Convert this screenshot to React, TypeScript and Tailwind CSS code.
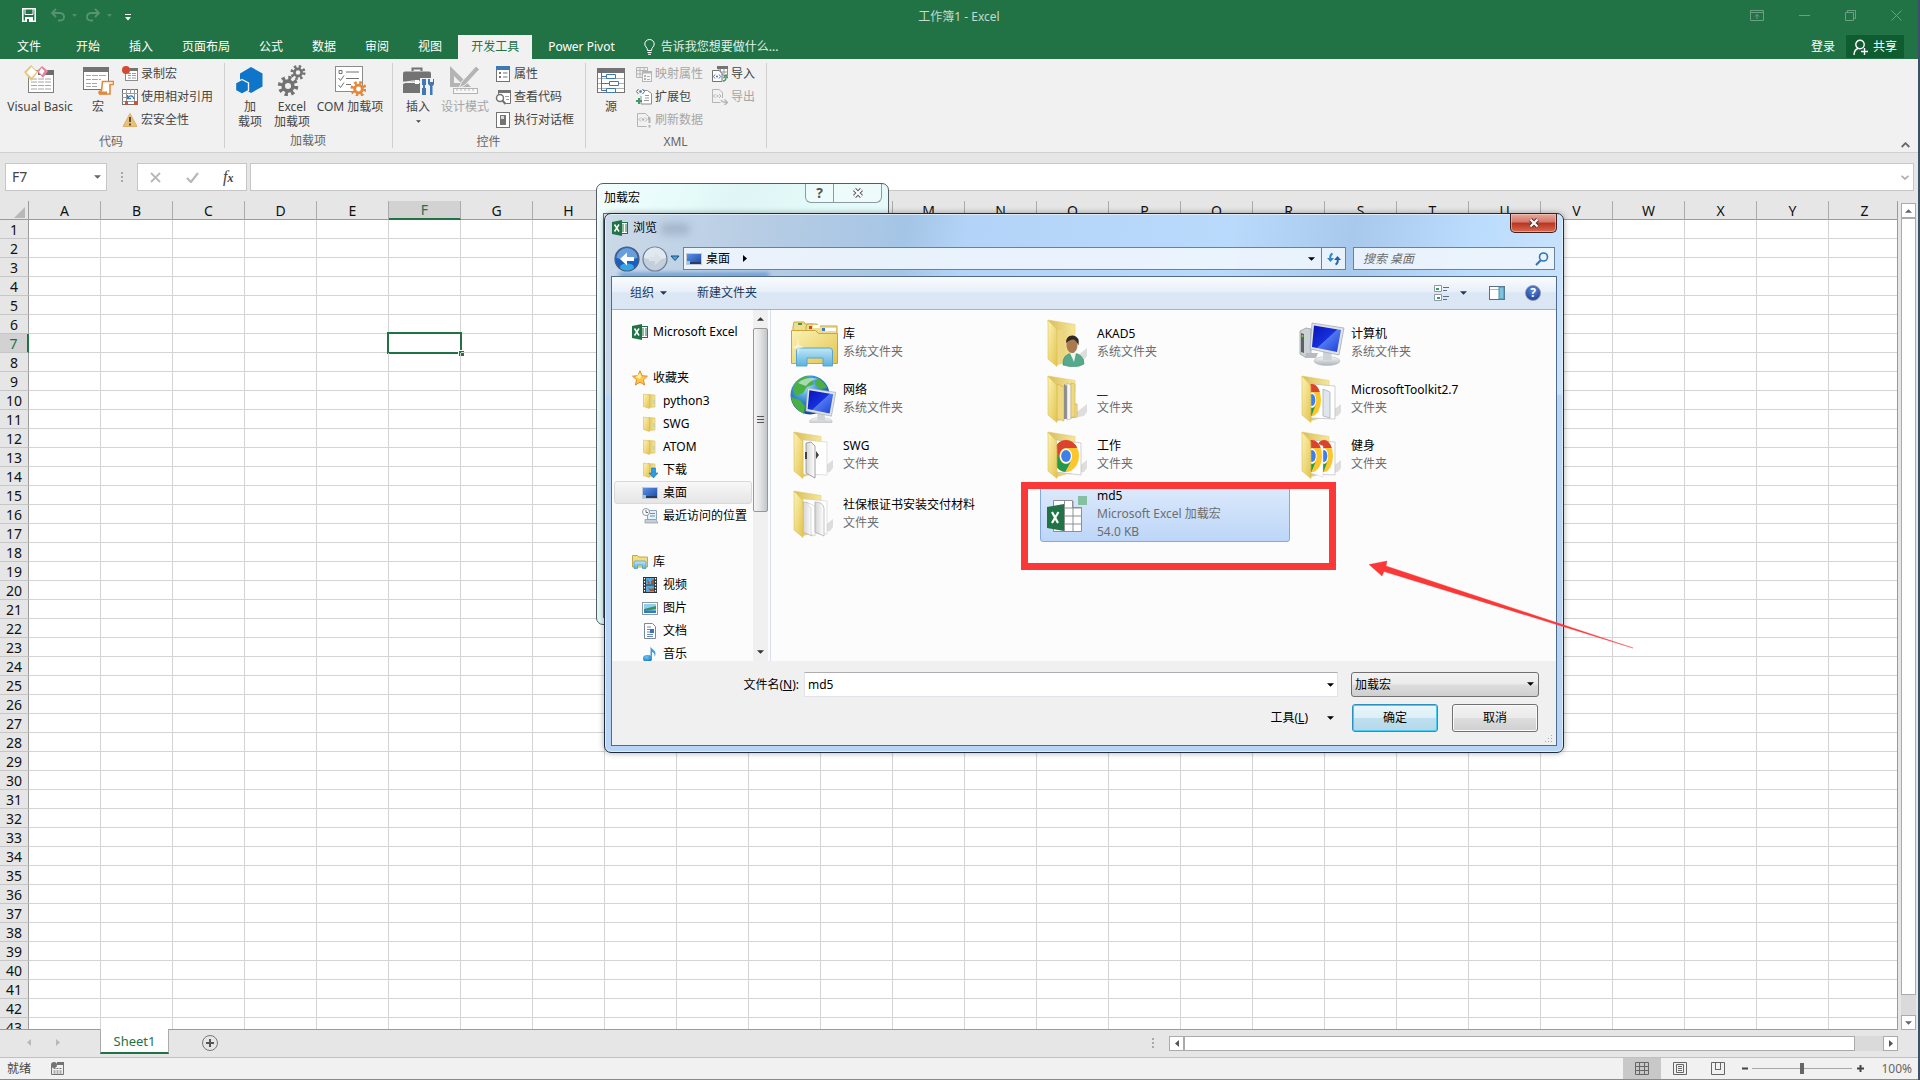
import React from "react";

type IconProps = { className?: string; children?: React.ReactNode; box?: string };

function Svg({ className = "h-4 w-4", box = "0 0 16 16", children }: IconProps) {
  return (
    <svg viewBox={box} className={`shrink-0 ${className}`} fill="none" aria-hidden="true">
      {children}
    </svg>
  );
}

const Big = ({ children }: { children: React.ReactNode }) => (
  <Svg className="h-8 w-8" box="0 0 32 32">
    {children}
  </Svg>
);

const Down = ({ className = "h-1 w-2" }: { className?: string }) => (
  <Svg className={className} box="0 0 8 4">
    <path d="M0 0h8L4 4z" fill="currentColor" />
  </Svg>
);

/* Gradients shared by the shell icons */
function SharedGradients() {
  return (
    <svg className="absolute h-0 w-0" aria-hidden="true">
      <defs>
        <linearGradient id="folderFront" x1="0" y1="0" x2="1" y2="1">
          <stop offset="0" stopColor="#fbf3b4" />
          <stop offset="1" stopColor="#e3c34f" />
        </linearGradient>
        <linearGradient id="folderBack" x1="0" y1="0" x2="1" y2="0">
          <stop offset="0" stopColor="#d9bd5a" />
          <stop offset="1" stopColor="#f7e79a" />
        </linearGradient>
        <linearGradient id="paper" x1="0" y1="0" x2="1" y2="0">
          <stop offset="0" stopColor="#d4d4d4" />
          <stop offset="1" stopColor="#ffffff" />
        </linearGradient>
        <linearGradient id="screen" x1="0" y1="0" x2="1" y2="1">
          <stop offset="0" stopColor="#0a14b8" />
          <stop offset="0.5" stopColor="#1631dc" />
          <stop offset="0.52" stopColor="#4f77f0" />
          <stop offset="1" stopColor="#1c3fd8" />
        </linearGradient>
        <linearGradient id="stand" x1="0" y1="0" x2="0" y2="1">
          <stop offset="0" stopColor="#fafafa" />
          <stop offset="1" stopColor="#adb2b8" />
        </linearGradient>
        <linearGradient id="tray" x1="0" y1="0" x2="0" y2="1">
          <stop offset="0" stopColor="#bfe8f6" />
          <stop offset="1" stopColor="#5db0df" />
        </linearGradient>
        <radialGradient id="globe" cx="0.4" cy="0.3" r="0.75">
          <stop offset="0" stopColor="#9fdcf5" />
          <stop offset="0.5" stopColor="#2f86d0" />
          <stop offset="1" stopColor="#0d3f8c" />
        </radialGradient>
        <linearGradient id="desk" x1="0" y1="0" x2="1" y2="1">
          <stop offset="0" stopColor="#5b93e6" />
          <stop offset="1" stopColor="#1c48a6" />
        </linearGradient>
        <radialGradient id="note" cx="0.4" cy="0.3" r="0.8">
          <stop offset="0" stopColor="#6fc6f0" />
          <stop offset="1" stopColor="#0a6ab8" />
        </radialGradient>
      </defs>
    </svg>
  );
}

/* ---------- Ribbon icons ---------- */

const gearPath = (cx: number, cy: number, r: number, color: string, hole: string) => (
  <g>
    <circle cx={cx} cy={cy} r={r * 0.85} stroke={color} strokeWidth={r * 0.45} strokeDasharray={`${(r * 0.85 * 6.283) / 16} ${(r * 0.85 * 6.283) / 16}`} />
    <circle cx={cx} cy={cy} r={r * 0.7} fill={color} />
    <circle cx={cx} cy={cy} r={r * 0.32} fill={hole} />
  </g>
);

const VisualBasicIcon = () => (
  <Big>
    <rect x="4.5" y="6.5" width="25" height="22" fill="#fff" stroke="#808080" />
    <path d="M14 6h16v5H14z" fill="#6d6d6d" />
    <path d="M7 15h6m1 0h6m1 0h6M7 18h6m1 0h6m1 0h6M7 21.500h6m1 0h6m1 0h6M7 25h6m1 0h6m1 0h6" stroke="#a6a6a6" />
    <path d="M7 1l7 7-7 9-7-9z" fill="#e8c77c" />
    <path d="M7.500 3l5 5-5 5.500-5-5z" fill="#fff" />
    <path d="M18 2l6 5-5 7-6-7z" fill="#e0879f" />
    <path d="M17.500 4l3 3-2.500 4-3-3z" fill="#fff" />
  </Big>
);

const MacroIcon = () => (
  <Big>
    <rect x="1.500" y="3.500" width="25" height="22" fill="#fff" stroke="#737373" />
    <path d="M1 3h26v5H1z" fill="#737373" />
    <path d="M4 11.500h5m1 0h6m1 0h7M4 15.500h5m1 0h6m1 0h2M4 19.500h5m1 0h5M4 22.500h5m1 0h5" stroke="#a6a6a6" />
    <path d="M20.500 17.500h11v3H28v9.500H18.500c-2 0-2-3 0-3h1z" fill="#fff" stroke="#e28a3c" strokeWidth="1.600" />
    <path d="M17 27.500h8v3h-8z" fill="#e28a3c" />
  </Big>
);

const StoreIcon = () => (
  <Big>
    <path d="M17 3l11.500 6.500v13L17 29 6 22.500v-13z" fill="#0f75c8" />
    <path d="M8 15.500l6.500 3.500v7.500L8 30l-6.500-3.500V19z" fill="#0f75c8" stroke="#f1f1f1" strokeWidth="1.400" />
  </Big>
);

const ExcelAddinIcon = () => (
  <Big>
    {gearPath(22, 8.500, 7, "#737373", "#f1f1f1")}
    {gearPath(12, 22, 9.500, "#737373", "#f1f1f1")}
  </Big>
);

const ComAddinIcon = () => (
  <Big>
    <rect x="1.500" y="2.500" width="27" height="25" fill="#fff" stroke="#8c8c8c" />
    <path d="M5 6.500h3v3H5zM4.500 14l2 2.500 3.500-5M4.500 21l2 2.500 3.500-5" stroke="#737373" />
    <path d="M12 8h13M12 14.500h13M12 20.500h5" stroke="#737373" />
    {gearPath(24.500, 25, 7.500, "#e28a3c", "#fff")}
  </Big>
);

const InsertControlIcon = () => (
  <Big>
    <path d="M10.500 7V4.500h9V7" stroke="#737373" strokeWidth="2" />
    <path d="M1 9.500q0-2 2-2h24q2 0 2 2v8H1zM1 19h28v8q0 2-2 2H1z" fill="#737373" />
    <path d="M1 19.500c7-3 12-3 18-2" stroke="#f1f1f1" />
    <path d="M13 16h4v4h-4z" fill="#fff" />
    <path d="M18 14h14v18H18z" fill="#f1f1f1" />
    <path d="M20 15h4v6h-1v3h1v7h-4v-7h1v-3h-1zM26 15v5l2 2v9h2.500v-9l2-2v-5h-1.500v3h-3v-3z" fill="#3f78b5" />
  </Big>
);

const DesignIcon = () => (
  <Big>
    <path d="M1 2l21 21H1zM5 12v7h7z" fill="#b4b4b4" fillRule="evenodd" />
    <path d="M27 2l3.500 3.500L16 21l-6 3 2.500-6z" fill="#b4b4b4" stroke="#f1f1f1" />
    <rect x="4.500" y="24.500" width="24" height="5" fill="#f8f8f8" stroke="#b4b4b4" />
    <path d="M8 24v3m4-3v3m4-3v3m4-3v3m4-3v3" stroke="#b4b4b4" />
  </Big>
);

const SourceIcon = () => (
  <Big>
    <rect x="2.500" y="4.500" width="27" height="24" fill="#fff" stroke="#737373" />
    <path d="M2 4h28v5H2z" fill="#737373" />
    <path d="M3 14.500h26M3 19.500h26M3 24.500h26" stroke="#b0b0b0" />
    <path d="M6.500 5v21.500h5M6.500 12.500h5M6.500 19.500h8" stroke="#3f78b5" />
    <path d="M11.500 10.500h9v4h-9zM14.500 17.500h9v4h-9zM11.500 24.500h9v4h-9z" fill="#fff" stroke="#3f78b5" />
  </Big>
);

const RecordIcon = () => (
  <Svg>
    <rect x="3.500" y="2.500" width="12" height="12" fill="#fff" stroke="#8c8c8c" />
    <path d="M8 2h8v3H8z" fill="#737373" />
    <path d="M6 7.500h3m1 0h4M6 9.500h3m1 0h4M6 12h3m1 0h4" stroke="#9a9a9a" />
    <circle cx="4" cy="4" r="4" fill="#d24a30" />
  </Svg>
);

const RelativeIcon = () => (
  <Svg>
    <rect x="0.500" y="0.500" width="15" height="15" fill="#fff" stroke="#737373" />
    <path d="M0 4.500h16M4.500 0v16M8.500 0v4M12.500 0v16M0 8.500h4M0 12.500h16" stroke="#9a9a9a" />
    <path d="M3 12h3v4H3zM12 12h4v4h-4z" fill="#c4573d" />
    <path d="M5 5h7v7H5z" fill="#fff" />
    <path d="M6 9c1-3 5-3 6 1M5.500 6v3.500H9" stroke="#3f78b5" strokeWidth="1.300" />
  </Svg>
);

const WarningIcon = () => (
  <Svg>
    <path d="M8 1.500L15 14.500H1z" fill="#e8c077" stroke="#dcb169" />
    <path d="M8 5v5M8 11.500v2" stroke="#444" strokeWidth="1.800" />
  </Svg>
);

const PropsIcon = () => (
  <Svg>
    <rect x="1.500" y="0.500" width="13" height="15" fill="#fff" stroke="#737373" />
    <path d="M1 0h14v4H1z" fill="#3f78b5" />
    <path d="M4 6h2v2H4zM4 10h2v2H4z" fill="#737373" />
    <path d="M8 7h4.500M8 11h4.500" stroke="#737373" />
  </Svg>
);

const CodeIcon = () => (
  <Svg>
    <path d="M3.500 5V1.500h12v13h-6" stroke="#737373" fill="#fff" />
    <path d="M3 1h13v3H3z" fill="#737373" />
    <path d="M10 7.500h4M11 10.500h3" stroke="#9a9a9a" />
    <circle cx="5" cy="9" r="3.500" fill="#fff" stroke="#737373" strokeWidth="1.500" />
    <path d="M7.500 11.500l3 3.500" stroke="#737373" strokeWidth="2" />
  </Svg>
);

const RunDialogIcon = () => (
  <Svg>
    <rect x="1.500" y="0.500" width="13" height="15" fill="#fff" stroke="#737373" />
    <rect x="5" y="3" width="6" height="10" fill="#737373" />
    <path d="M6 4h3v3H6z" fill="#d8d8d8" />
  </Svg>
);

const MapIcon = () => (
  <Svg>
    <path d="M.5 1.500h11v10H.5zM.5 4.500h11M.5 8h6M4 2v9M8 2v4" stroke="#b4b4b4" />
    <rect x="6.500" y="5.500" width="9" height="10" fill="#f6f6f6" stroke="#b4b4b4" />
    <path d="M6 5h10v2.500H6zM8 9h2v2H8zM8 12h2v2H8zM11 10h3v1h-3zM11 13h3v1h-3z" fill="#b4b4b4" />
  </Svg>
);

const PackIcon = () => (
  <Svg>
    <path d="M7 1.500h4.500l4 3V15H5V7" fill="#fff" stroke="#8c8c8c" />
    <path d="M9 6.500h4M9 9h4M8 11.500h5" stroke="#9a9a9a" />
    <path d="M2.500 0L.5 2.500l2 2.500M6.500 0l2 2.500-2 2.500" stroke="#3f78b5" />
    <circle cx="4.500" cy="2.500" r="1.300" fill="#3f78b5" />
    <path d="M3 9v6M0 12h6" stroke="#3f9a68" strokeWidth="2" />
  </Svg>
);

const RefreshDataIcon = () => (
  <Svg>
    <path d="M1.500 1.500h8l3 3V8M1.500 1.500v13h9" stroke="#b4b4b4" />
    <path d="M5 5.500l-2 2 2 2M9 5.500l2 2-2 2" stroke="#b4b4b4" />
    <circle cx="7" cy="7.500" r="1.200" fill="#b4b4b4" />
    <path d="M13.500 5v6M13.500 13v2.500" stroke="#b4b4b4" strokeWidth="2" />
  </Svg>
);

const ImportIcon = () => (
  <Svg>
    <path d="M5.500 1.500h10v8h-4z" fill="#fff" stroke="#8c8c8c" />
    <path d="M5 0h11v3H5z" fill="#737373" />
    <path d="M8.500 3v3M12 3v6M8 6h8" stroke="#9a9a9a" />
    <path d="M.5 4.500H7l3 3v8H.5z" fill="#fff" stroke="#737373" />
    <path d="M3 8.500l-1.500 2L3 12.500M7 8.500l1.500 2-1.500 2" stroke="#3f78b5" />
    <circle cx="5" cy="10.500" r="1" fill="#3f78b5" />
    <path d="M11 15c2 0 3-1 3-4M11.500 12L14 9l2 3" stroke="#3f9a68" strokeWidth="1.400" />
  </Svg>
);

const ExportIcon = () => (
  <Svg>
    <path d="M.5.5H7l3.500 3V9M.5.500v13h8" stroke="#b4b4b4" />
    <path d="M3.500 5l-2 2 2 2M7 5l2 2-2 2" stroke="#b4b4b4" />
    <circle cx="5.500" cy="7" r="1" fill="#b4b4b4" />
    <path d="M9 11c1 2 3 2.500 6 2.500M12.500 10.500l3 3-3 2.500" stroke="#b4b4b4" strokeWidth="1.400" />
  </Svg>
);

/* ---------- Shell icons ---------- */

const ExcelMark = () => (
  <Svg>
    <rect x="8.500" y="2.500" width="7" height="11" fill="#fff" stroke="#217346" />
    <path d="M10 5h2m1 0h2M10 7h2m1 0h2M10 9h2m1 0h2M10 11h2m1 0h2" stroke="#217346" />
    <path d="M0 2l10-2v16L0 14z" fill="#217346" />
    <path d="M2.500 4.500l4.500 7M7 4.500l-4.500 7" stroke="#fff" strokeWidth="1.500" />
  </Svg>
);

const StarIcon = () => (
  <Svg>
    <path d="M8 .8l2.100 4.900 5.300.5-4 3.600 1.200 5.200L8 12.200 3.400 15l1.200-5.200-4-3.600 5.300-.5z" fill="#fbc64a" stroke="#e58a2c" />
    <path d="M8 3l1.300 3.500L8 9 4 7z" fill="#fff0a8" />
  </Svg>
);

const FolderMini = ({ arrow }: { arrow?: boolean }) => (
  <Svg>
    <path d="M6 1.500l7 .5v12l-7 .5z" fill="url(#folderBack)" stroke="#d8bb5e" strokeWidth=".6" />
    <path d="M1.500 1l6 1v13.500l-6-2z" fill="url(#folderFront)" stroke="#d8bb5e" strokeWidth=".6" />
    <path d="M11 7h2v4h-2z" fill="#bcd8b8" />
    {arrow && <path d="M9.500 6h4v5H16l-4.500 5L7 11h2.500z" fill="#2f9be0" stroke="#1874b8" strokeWidth=".6" />}
  </Svg>
);

const DesktopMini = () => (
  <Svg>
    <rect x="0" y="2" width="16" height="12" fill="#c3cad4" />
    <rect x="1" y="3" width="14" height="10" fill="url(#desk)" />
    <path d="M1 11h14v2H1z" fill="#2b3c5c" />
    <path d="M1 10h3v3H1z" fill="#7fd0f0" />
  </Svg>
);

const RecentMini = () => (
  <Svg>
    <path d="M5.500 2.500h9v9h-9z" fill="#e8f0f6" stroke="#8ea3b5" />
    <path d="M8 5.500h5M8 8h5" stroke="#4a9bd0" />
    <circle cx="4" cy="4" r="3.500" fill="#fff" stroke="#8c98a3" />
    <path d="M4 2v2.500h2" stroke="#667" />
    <path d="M3 11.500h11l2 3.500H3z" fill="#c9ced3" stroke="#8c98a3" strokeWidth=".7" />
  </Svg>
);

const LibraryMini = () => (
  <Svg>
    <path d="M.5 3V1.500h5L7 3h8.500v10H.5z" fill="#f2dd84" stroke="#c9a945" />
    <path d="M2 14.500V8q0-1 1-1h10q1 0 1 1v6.500h-3.500V11h-5v3.500z" fill="url(#tray)" stroke="#3f98c8" strokeWidth=".7" />
  </Svg>
);

const VideoMini = () => (
  <Svg>
    <rect x="1" y="0" width="14" height="16" fill="#2a3137" />
    <rect x="4" y="1" width="8" height="6.500" fill="#58a8dc" />
    <rect x="4" y="8.500" width="8" height="6.500" fill="#58a8dc" />
    <path d="M5 2l3 4-2 1M9 4l3-2v5H9zM6 11l3 1 3-1v3H8z" fill="#a5522e" />
    <path d="M2.500 1v14M13.500 1v14" stroke="#fff" strokeWidth="1.200" strokeDasharray="1.500 1.500" />
  </Svg>
);

const PictureMini = () => (
  <Svg>
    <rect x=".5" y="2.500" width="15" height="12" fill="#fff" stroke="#8c98a3" />
    <path d="M2 4h12v9H2z" fill="#8fd0f0" />
    <path d="M2 9l4-1 8-2v3l-5 1-7 1z" fill="#3f8f5c" />
    <path d="M2 10.500h12V13H2z" fill="#2f7fc0" />
  </Svg>
);

const DocMini = () => (
  <Svg>
    <path d="M2.500.5h8l3 3v12h-11z" fill="#fff" stroke="#7d8894" />
    <path d="M5 4h4M5 6.500h3M5 9h3M5 11.500h6M5 13.500h6" stroke="#6a8cb8" />
    <path d="M8 6h4v4H8z" fill="#3f72b4" />
  </Svg>
);

const MusicMini = () => (
  <Svg>
    <ellipse cx="5.500" cy="12.500" rx="4.500" ry="3.400" fill="url(#note)" />
    <path d="M8.500 13V.5c1 3 5 3.500 5 7 0 2-1 3-1 3 .3-3-1-4-2.500-4.500V13z" fill="#3f9ede" />
  </Svg>
);

const Large = ({ children }: { children: React.ReactNode }) => (
  <Svg className="h-12 w-12" box="0 0 48 48">
    {children}
  </Svg>
);

const LibraryLarge = () => (
  <Large>
    <path d="M3 8l1-5h10l1 2h8v8H3z" fill="#f0dd8c" stroke="#c9a945" />
    <path d="M16 8l1-3h10l1 2h19v10H16z" fill="#f0dd8c" stroke="#c9a945" />
    <path d="M8 4h4v2H8z" fill="#3f9a48" />
    <path d="M19 7h3v3h-3z" fill="#d24a30" />
    <path d="M23 6h7v3h-7zM34 9h12v3H34z" fill="#fff" />
    <path d="M32 9h3v3h-3z" fill="#3f78c8" />
    <path d="M1.500 11.500h24l3 3h19v30h-46z" fill="url(#folderFront)" stroke="#caa53c" />
    <path d="M6.500 47V32q0-3 3-3h30q3 0 3 3v15H33v-8H17v8z" fill="url(#tray)" stroke="#58a5cc" />
    <path d="M8 19l1 7 5 2-5 2-1 7-1-7-5-2 5-2z" fill="#fff" opacity=".5" />
  </Large>
);

const Monitor = ({ x = 0, y = 0 }: { x?: number; y?: number }) => (
  <g transform={`translate(${x} ${y})`}>
    <ellipse cx="17" cy="38" rx="13" ry="4.500" fill="url(#stand)" stroke="#b9bdc2" strokeWidth=".6" />
    <path d="M13 28h8l1 9h-9z" fill="#cfd3d7" />
    <path d="M2 0l32 5-5 27L0 26z" fill="#dfe3e6" stroke="#9ea4aa" strokeWidth=".7" />
    <path d="M4 2.500l27 4.500-4 22L2 24z" fill="url(#screen)" />
  </g>
);

const NetworkLarge = () => (
  <Large>
    <circle cx="20" cy="20" r="19.500" fill="url(#globe)" />
    <path d="M3 12q5-9 13-11l6 3 2 5-7 3-4 6-8 3zM27 3q7 3 10 10l-7 1-5-5zM1 22l9 3 5 6-1 8Q3 34 1 22z" fill="#4bb043" />
    <path d="M8 8q8-7 20-4-8 1-12 7z" fill="#e6f7fb" opacity=".6" />
    <g transform="translate(15 13) scale(.88)">
      <Monitor x={1} y={0} />
    </g>
  </Large>
);

const ComputerLarge = () => (
  <Large>
    <path d="M2 12l6-3 5 1v26l-6 2-5-3z" fill="#cdd2d6" stroke="#8f959b" strokeWidth=".7" />
    <path d="M3 14l3 1v19l-3-1z" fill="#5c6268" />
    <circle cx="4.500" cy="17" r="1" fill="#7be03a" />
    <path d="M8 34h12l-2 5H7z" fill="#b8bcc1" />
    <Monitor x={12} y={4} />
  </Large>
);

function FolderShell({ children }: { children?: React.ReactNode }) {
  return (
    <Large>
      <path d="M24 44l16-3 3-4v-8z" fill="#000" opacity=".12" />
      <path d="M4 1l27 4.500v8L29 41 12 46z" fill="url(#folderBack)" stroke="#dcc46e" strokeWidth=".5" />
      {children}
      <path d="M4 1l8.500 9c.6 2 .5 24 .5 37.500L4 40z" fill="url(#folderFront)" stroke="#dcc052" strokeWidth=".6" />
    </Large>
  );
}

const Sheet = ({ x }: { x: number }) => (
  <path d={`M${x} 12q8 0 9 6v28l-9-4z`} fill="url(#paper)" stroke="#a9a9a9" strokeWidth=".7" />
);

const ChromeDisc = ({ cx, rx = 11 }: { cx: number; rx?: number }) => (
  <g transform={`translate(${cx} 25) scale(${rx / 16} 1)`}>
    <circle r="16" fill="#fbc62e" />
    <path d="M-13.900-8A16 16 0 0113.900-8H0A8 8 0 00-7 4z" fill="#d9432f" />
    <path d="M-13.900-8A16 16 0 00-1 16L7 4A8 8 0 01-7 4z" fill="#23984f" />
    <circle r="7.500" fill="#fff" />
    <circle r="6" fill="#3f7fe8" />
  </g>
);

const UserFolder = () => (
  <FolderShell>
    <path d="M13 11h6v33l-6 2z" fill="#ecd681" />
    <path d="M19 46q-1-11 10-12 11 1 11 11-8 5-21 1z" fill="#56a98a" stroke="#3a8a6c" strokeWidth=".6" />
    <path d="M26 34h6l-2 9z" fill="#eef6f2" />
    <ellipse cx="28" cy="26" rx="5.500" ry="8" fill="#a9794f" />
    <path d="M22 24q0-8 7-7.500 7 1 5.500 10-2-5-5-6-4 0-7.500 3.500z" fill="#2f2a28" />
  </FolderShell>
);

const YellowFilesFolder = () => (
  <FolderShell>
    <path d="M26 29h7v13l-8 1z" fill="#efe19b" stroke="#d8bb5e" />
    <path d="M13 9l7 3v34l-7-2z" fill="#eed981" stroke="#d0b04c" strokeWidth=".6" />
    <path d="M20 9l3 2v33h-3z" fill="#8e8e8e" />
    <path d="M23 8l4 2v34l-4 1z" fill="#f5f5f5" stroke="#aaa" strokeWidth=".5" />
    <path d="M27 8l4 1v32l-4 2z" fill="#eed981" stroke="#d0b04c" strokeWidth=".6" />
  </FolderShell>
);

const PapersFolder = () => (
  <FolderShell>
    <path d="M13 9l24 2v33l-24-1z" fill="#fff" stroke="#ccc" strokeWidth=".6" />
    <Sheet x={13} />
    <path d="M16 12l9 4v30l-4-2V18z" fill="#fff" stroke="#bbb" strokeWidth=".5" />
    <Sheet x={25} />
  </FolderShell>
);

const BinderFolder = () => (
  <FolderShell>
    <path d="M13 9l24 2v33l-24-1z" fill="#fff" stroke="#ccc" strokeWidth=".6" />
    <path d="M16 12l5-1 4 4v32l-9-5z" fill="url(#paper)" stroke="#8c8c8c" strokeWidth=".8" />
    <path d="M15 21h2v7h-2zM26 20l3 4-3 4z" fill="#444" />
  </FolderShell>
);

const ChromeFolder = () => (
  <FolderShell>
    <path d="M12 9l25 3v32l-25-3z" fill="#fff" stroke="#bbb" strokeWidth=".7" />
    <ChromeDisc cx={22} rx={13} />
  </FolderShell>
);

const ChromeSheetFolder = () => (
  <FolderShell>
    <path d="M13 9l24 2v33l-24-1z" fill="#fff" stroke="#bbb" strokeWidth=".7" />
    <ChromeDisc cx={14} rx={9} />
    <path d="M25 14l7 3v26l-7-2z" fill="#dfe6ee" stroke="#9aa" strokeWidth=".7" />
  </FolderShell>
);

const TwinChromeFolder = () => (
  <FolderShell>
    <path d="M13 9l24 2v33l-24-1z" fill="#fff" stroke="#bbb" strokeWidth=".7" />
    <ChromeDisc cx={26} rx={9} />
    <path d="M13 10l12 5v31l-12-4z" fill="#fff" stroke="#ccc" strokeWidth=".5" />
    <ChromeDisc cx={14} rx={10} />
  </FolderShell>
);

const XlamIcon = () => (
  <Large>
    <path d="M9.500 10.500h19v7h9v24h-28z" fill="#fff" stroke="#8b9094" />
    <path d="M10 18h28M10 26h28M10 34h28M20.500 11v31M29 11v31" stroke="#8b9094" />
    <path d="M34 6h9v9h-9z" fill="#86bfa2" />
    <path d="M3 17l17-3v27L3 38z" fill="#217346" />
    <path d="M8 22l6 11M14.500 22L8 33" stroke="#fff" strokeWidth="2.200" />
  </Large>
);

/* ---------- Excel window ---------- */

const ribbonTabs = ["开始", "插入", "页面布局", "公式", "数据", "审阅", "视图", "开发工具", "Power Pivot"];

function TitleBar() {
  return (
    <header className="bg-[#217346] text-white">
      <div className="grid h-[35px] grid-cols-[1fr_auto_1fr] items-center">
        <div className="flex items-center pb-[5px] pl-[21px]">
          <button aria-label="保存" className="p-px">
            <Svg className="h-[14px] w-[14px]" box="0 0 14 14">
              <path d="M.8.800h12.400v12.400H.8z" stroke="#fff" strokeWidth="1.600" />
              <path d="M3 1h8v5.500H3z" fill="#217346" stroke="#fff" />
              <path d="M3 9h8v5H3z" fill="#fff" />
              <path d="M5 11h2v3H5z" fill="#217346" />
            </Svg>
          </button>
          <button aria-label="撤消" className="ml-[14px] flex items-center gap-[7px] text-[#579472]">
            <Svg className="h-[14px] w-[14px]" box="0 0 14 14">
              <path d="M5 1L1 5l4 4M1 5h8q4 .5 4 4t-4 3.500H7" stroke="currentColor" strokeWidth="1.800" />
            </Svg>
            <Down className="h-[3px] w-[5px]" />
          </button>
          <button aria-label="恢复" className="ml-[9px] flex items-center gap-[7px] text-[#579472]">
            <Svg className="h-[14px] w-[14px]" box="0 0 14 14">
              <path d="M9 1l4 4-4 4M13 5H5Q1 5.500 1 9t4 3.500h2" stroke="currentColor" strokeWidth="1.800" />
            </Svg>
            <Down className="h-[3px] w-[5px]" />
          </button>
          <button aria-label="自定义快速访问工具栏" className="ml-[13px] pt-1">
            <Svg className="h-[7px] w-[6px]" box="0 0 6 7">
              <path d="M0 .5h6" stroke="#fff" />
              <path d="M0 3h6L3 6.500z" fill="#fff" />
            </Svg>
          </button>
        </div>
        <h1 className="pb-[2px] text-xs text-[#c3dacd]">工作簿1 - Excel</h1>
        <div className="flex items-center justify-end gap-[35px] pb-[5px] pr-4 text-[#6aa184]">
          <button aria-label="功能区显示选项">
            <Svg className="h-[11px] w-[14px]" box="0 0 14 11">
              <path d="M.5.500h13v10H.5zM1 2.500h12M7 9V4.500M5 6.500l2-2 2 2" stroke="currentColor" />
            </Svg>
          </button>
          <button aria-label="最小化">
            <Svg className="h-[11px] w-[11px]" box="0 0 11 11"><path d="M0 5.500h11" stroke="currentColor" /></Svg>
          </button>
          <button aria-label="向下还原">
            <Svg className="h-[11px] w-[11px]" box="0 0 11 11"><path d="M.5 2.500h8v8h-8zM2.500 2.500v-2h8v8h-2" stroke="currentColor" /></Svg>
          </button>
          <button aria-label="关闭">
            <Svg className="h-[11px] w-[11px]" box="0 0 11 11"><path d="M.5.500l10 10M10.500.500l-10 10" stroke="currentColor" /></Svg>
          </button>
        </div>
      </div>
      <nav className="flex h-6 items-stretch leading-[22px]">
        <button className="pl-[17px] pr-[22px]">文件</button>
        <div className="flex gap-[3px]">
          {ribbonTabs.map((t) => (
            <button key={t} className={t === "开发工具" ? "bg-[#f1f1f1] px-[13px] text-[#217346]" : "px-[13px]"}>
              {t}
            </button>
          ))}
        </div>
        <button className="ml-4 flex items-center gap-[6px] text-[#e2efe8]">
          <Svg className="h-4 w-[11px]" box="0 0 11 16">
            <path d="M3.500 11.500C3.500 8 .800 8 .800 5a4.700 4.500 0 019.400 0c0 3-2.700 3-2.700 6.500zM3.500 13.500h4M4 15.300h3" stroke="#fff" />
          </Svg>
          告诉我您想要做什么...
        </button>
        <div className="ml-auto flex pr-[14px]">
          <button className="pr-[11px]">登录</button>
          <button className="mb-px flex items-center gap-1 bg-[#0e5c2f] px-[7px]">
            <Svg className="h-4 w-4">
              <circle cx="7" cy="5.500" r="4.200" stroke="#fff" strokeWidth="1.400" />
              <path d="M1 16q0-5 4-6.500M8 12.500h7M11.500 9v7" stroke="#fff" strokeWidth="1.400" />
            </Svg>
            共享
          </button>
        </div>
      </nav>
    </header>
  );
}

function BigButton({ icon, lines, width, muted, arrow }: { icon: React.ReactNode; lines: string[]; width: string; muted?: boolean; arrow?: boolean }) {
  return (
    <button className={`flex flex-col items-center pt-[5px] ${width} ${muted ? "text-[#a6a6a6]" : ""}`}>
      {icon}
      <span className="mt-[3px] block whitespace-nowrap leading-[15px]">
        {lines.map((l) => (
          <span key={l} className="block text-center">{l}</span>
        ))}
      </span>
      {arrow && <Down className="mt-[6px] h-[3px] w-[5px]" />}
    </button>
  );
}

function SmallButton({ icon, label, muted }: { icon: React.ReactNode; label: string; muted?: boolean }) {
  return (
    <button className={`flex h-[23px] items-center gap-[3px] whitespace-nowrap ${muted ? "text-[#a6a6a6]" : ""}`}>
      {icon}
      {label}
    </button>
  );
}

function Group({ label, width, children }: { label: string; width: string; children: React.ReactNode }) {
  return (
    <section className={`my-1 flex flex-col border-r border-[#d0d0d0] ${width}`}>
      <div className="-mt-1 flex h-[76px] items-start">{children}</div>
      <h2 className="pr-1 pt-[3px] text-center leading-[15px] text-[#666]">{label}</h2>
    </section>
  );
}

function Ribbon() {
  return (
    <div className="flex h-[94px] border-b border-[#d0d0d0] bg-[#f1f1f1] text-[#444]">
      <Group label="代码" width="w-[225px] pl-[2px]">
        <BigButton icon={<VisualBasicIcon />} lines={["Visual Basic"]} width="w-[76px]" />
        <BigButton icon={<MacroIcon />} lines={["宏"]} width="w-10" />
        <div className="ml-1 pt-[3px]">
          <SmallButton icon={<RecordIcon />} label="录制宏" />
          <SmallButton icon={<RelativeIcon />} label="使用相对引用" />
          <SmallButton icon={<WarningIcon />} label="宏安全性" />
        </div>
      </Group>
      <Group label="加载项" width="w-[168px] pl-[3px]">
        <BigButton icon={<StoreIcon />} lines={["加", "载项"]} width="w-11" />
        <BigButton icon={<ExcelAddinIcon />} lines={["Excel", "加载项"]} width="w-10" />
        <BigButton icon={<ComAddinIcon />} lines={["COM 加载项"]} width="w-[76px]" />
      </Group>
      <Group label="控件" width="w-[193px] pl-[3px]">
        <BigButton icon={<InsertControlIcon />} lines={["插入"]} width="w-11" arrow />
        <BigButton icon={<DesignIcon />} lines={["设计模式"]} width="w-[50px]" muted />
        <div className="ml-[5px] pt-[3px]">
          <SmallButton icon={<PropsIcon />} label="属性" />
          <SmallButton icon={<CodeIcon />} label="查看代码" />
          <SmallButton icon={<RunDialogIcon />} label="执行对话框" />
        </div>
      </Group>
      <Group label="XML" width="w-[181px] pl-[3px]">
        <BigButton icon={<SourceIcon />} lines={["源"]} width="w-11" />
        <div className="ml-[3px] pt-[3px]">
          <SmallButton icon={<MapIcon />} label="映射属性" muted />
          <SmallButton icon={<PackIcon />} label="扩展包" />
          <SmallButton icon={<RefreshDataIcon />} label="刷新数据" muted />
        </div>
        <div className="ml-[9px] pt-[3px]">
          <SmallButton icon={<ImportIcon />} label="导入" />
          <SmallButton icon={<ExportIcon />} label="导出" muted />
        </div>
      </Group>
      <button aria-label="折叠功能区" className="ml-auto self-end pb-1 pr-2 text-[#666]">
        <Svg className="h-[6px] w-[9px]" box="0 0 9 6"><path d="M.7 5l3.800-3.800L8.300 5" stroke="currentColor" strokeWidth="1.800" /></Svg>
      </button>
    </div>
  );
}

function FormulaBar() {
  return (
    <div className="flex h-12 items-center bg-[#e6e6e6] pl-[5px] pr-1">
      <div className="flex h-7 w-[102px] items-center border border-[#c6c6c6] bg-white pr-[5px]">
        <input aria-label="名称框" defaultValue="F7" className="w-0 flex-1 bg-transparent pl-[6px] text-sm text-[#444] outline-none" />
        <button aria-label="名称列表" className="text-[#666]"><Down className="h-1 w-[7px]" /></button>
      </div>
      <Svg className="ml-[14px] h-[10px] w-[2px]" box="0 0 2 10"><path d="M0 0h2v2H0zM0 4h2v2H0zM0 8h2v2H0z" fill="#a8a8a8" /></Svg>
      <div className="ml-[14px] flex h-7 w-[110px] items-center border border-[#c6c6c6] bg-white pl-3">
        <button aria-label="取消输入">
          <Svg className="h-[11px] w-[11px]" box="0 0 11 11"><path d="M1 1l9 9M10 1l-9 9" stroke="#b8b8b8" strokeWidth="1.800" /></Svg>
        </button>
        <button aria-label="输入" className="ml-[25px]">
          <Svg className="h-[11px] w-[13px]" box="0 0 13 11"><path d="M1 6l4 4 7-9" stroke="#b8b8b8" strokeWidth="2.200" /></Svg>
        </button>
        <button aria-label="插入函数" className="ml-6 font-['Liberation_Serif',serif] text-base italic leading-none text-[#444]">
          f<span className="text-xs font-bold">x</span>
        </button>
      </div>
      <div className="ml-[3px] flex h-7 flex-1 items-center border border-[#c6c6c6] bg-white pr-1">
        <input aria-label="编辑栏" className="h-full flex-1 bg-transparent px-2 text-sm outline-none" />
        <button aria-label="展开编辑栏">
          <Svg className="h-[5px] w-[8px]" box="0 0 8 5"><path d="M.5.800L4 4l3.500-3.200" stroke="#b0b0b0" strokeWidth="1.800" /></Svg>
        </button>
      </div>
    </div>
  );
}

const columns = "ABCDEFGHIJKLMNOPQRSTUVWXYZ".split("");
const rows = Array.from({ length: 43 }, (_, i) => i + 1);

function Sheet1Grid() {
  return (
    <div className="flex min-h-0 flex-1 bg-[#e6e6e6] pr-[2px]">
      <div className="min-w-0 flex-1 overflow-hidden border-b border-r border-[#9b9b9b]">
        <table className="w-[1901px] table-fixed border-separate border-spacing-0 bg-white text-sm text-[#111]">
          <thead>
            <tr className="h-[19px] bg-[#e6e6e6]">
              <th aria-label="全选" className="w-[29px] border-b border-r border-[#9b9b9b] p-0">
                <Svg className="ml-auto mr-[3px] mt-1 h-[11px] w-[11px]" box="0 0 11 11"><path d="M11 0v11H0z" fill="#b8b8b8" /></Svg>
              </th>
              {columns.map((c) => (
                <th
                  key={c}
                  scope="col"
                  className={
                    c === "F"
                      ? "w-[72px] border-b-2 border-r border-b-[#217346] border-r-[#ababab] bg-[#d2d2d2] p-0 pt-px font-normal leading-4 text-[#217346]"
                      : "w-[72px] border-b border-r border-b-[#9b9b9b] border-r-[#ababab] p-0 pt-[2px] font-normal leading-4"
                  }
                >
                  {c}
                </th>
              ))}
            </tr>
          </thead>
          <tbody>
            {rows.map((r) => (
              <tr key={r} className="h-[19px]">
                <th
                  scope="row"
                  className={
                    r === 7
                      ? "border-b border-r-2 border-b-[#c6c6c6] border-r-[#217346] bg-[#d2d2d2] p-0 pt-[2px] font-normal leading-4 text-[#217346]"
                      : "border-b border-r border-b-[#c6c6c6] border-r-[#9b9b9b] bg-[#e6e6e6] p-0 pt-[2px] font-normal leading-4"
                  }
                >
                  {r}
                </th>
                {columns.map((c) => (
                  <td key={c} className="relative border-b border-r border-[#d4d4d4] p-0">
                    {r === 7 && c === "F" && (
                      <span className="absolute -inset-[2px] border-2 border-[#217346]">
                        <span className="absolute -bottom-1 -right-1 h-[6px] w-[6px] border-l border-t border-white bg-[#217346]" />
                      </span>
                    )}
                  </td>
                ))}
              </tr>
            ))}
          </tbody>
        </table>
      </div>
      <div className="ml-[3px] mt-[2px] flex w-[15px] flex-col bg-[#dadada] text-[#666]">
        <button aria-label="向上滚动" className="flex h-[15px] items-center justify-center border border-[#ababab] bg-white">
          <Down className="h-1 w-[7px] rotate-180" />
        </button>
        <div className="flex-1 border border-[#ababab] bg-white" />
        <div className="h-[20px]" />
        <button aria-label="向下滚动" className="flex h-[15px] items-center justify-center border border-[#ababab] bg-white">
          <Down className="h-1 w-[7px]" />
        </button>
      </div>
    </div>
  );
}

function SheetTabs() {
  return (
    <div className="flex h-7 items-start border-b border-[#c0c0c0] bg-[#e6e6e6] pr-5">
      <button aria-label="上一个工作表" className="ml-[27px] mt-[9px] text-[#b8b8b8]">
        <Svg className="h-[7px] w-1" box="0 0 4 7"><path d="M4 0v7L0 3.500z" fill="currentColor" /></Svg>
      </button>
      <button aria-label="下一个工作表" className="ml-[25px] mt-[9px] text-[#b8b8b8]">
        <Svg className="h-[7px] w-1" box="0 0 4 7"><path d="M0 0v7l4-3.500z" fill="currentColor" /></Svg>
      </button>
      <button className="-mt-px ml-10 h-[25px] w-[69px] border-x border-b-2 border-x-[#ababab] border-b-[#217346] bg-white text-[13px] leading-[22px] text-[#217346]">
        Sheet1
      </button>
      <button aria-label="新工作表" className="ml-[33px] mt-[5px] text-[#777]">
        <Svg>
          <circle cx="8" cy="8" r="7.500" stroke="currentColor" />
          <path d="M8 4v8M4 8h8" stroke="#555" strokeWidth="2" />
        </Svg>
      </button>
      <Svg className="ml-auto mt-2 h-[10px] w-[2px]" box="0 0 2 10"><path d="M0 0h2v2H0zM0 4h2v2H0zM0 8h2v2H0z" fill="#a8a8a8" /></Svg>
      <div className="ml-[15px] mt-[6px] flex h-[15px] w-[38.4%] bg-[#dadada] text-[#555]">
        <button aria-label="向左滚动" className="flex w-[15px] items-center justify-center border border-[#ababab] bg-white">
          <Svg className="h-[7px] w-1" box="0 0 4 7"><path d="M4 0v7L0 3.500z" fill="currentColor" /></Svg>
        </button>
        <div className="mr-7 flex-1 border border-[#ababab] bg-white" />
        <button aria-label="向右滚动" className="flex w-[15px] items-center justify-center border border-[#ababab] bg-white">
          <Svg className="h-[7px] w-1" box="0 0 4 7"><path d="M0 0v7l4-3.500z" fill="currentColor" /></Svg>
        </button>
      </div>
    </div>
  );
}

function StatusBar() {
  return (
    <footer className="flex h-[22px] items-center border-b border-[#8a8a8a] bg-[#f1f1f1] pl-[7px] pr-[6px] text-[#444]">
      <span>就绪</span>
      <button aria-label="录制宏" className="ml-5">
        <Svg className="h-[13px] w-[13px]" box="0 0 13 13">
          <path d="M.5 3v9.500h12V.500H6" stroke="#737373" />
          <path d="M6 0h7v3H6z" fill="#737373" />
          <path d="M2.500 6.500h2m1 0h2m1 0h2M2.500 9h2m1 0h2m1 0h2M2.500 11h2m1 0h2m1 0h2" stroke="#737373" />
          <circle cx="3" cy="3" r="3" fill="#737373" />
        </Svg>
      </button>
      <div className="ml-auto flex h-full items-center text-[#666]">
        <button aria-label="普通" className="flex h-full w-[38px] items-center justify-center bg-[#c8c8c8]">
          <Svg className="h-[13px] w-[14px]" box="0 0 14 13"><path d="M.5.500h13v12H.5zM0 4.500h14M0 8.500h14M4.500 0v13M9.500 0v13" stroke="currentColor" /></Svg>
        </button>
        <button aria-label="页面布局" className="flex h-full w-[38px] items-center justify-center">
          <Svg className="h-[13px] w-[14px]" box="0 0 14 13"><path d="M.5.500h13v12H.5zM3.500 2.500h7v8h-7zM5 4.500h4M5 6.500h4M5 8.500h4" stroke="currentColor" /></Svg>
        </button>
        <button aria-label="分页预览" className="flex h-full w-[38px] items-center justify-center">
          <Svg className="h-[13px] w-[14px]" box="0 0 14 13"><path d="M.5.500h13v12H.5zM4.500 0v7.500M4 7.500h5.500M9.500 0v8" stroke="currentColor" /></Svg>
        </button>
        <button aria-label="缩小" className="ml-[5px]">
          <Svg className="h-[7px] w-[6px]" box="0 0 6 7"><path d="M0 3.500h6" stroke="#444" strokeWidth="2" /></Svg>
        </button>
        <input
          type="range"
          aria-label="显示比例"
          defaultValue={50}
          className="ml-1 h-[11px] w-[100px] appearance-none bg-[linear-gradient(#a8a8a8,#a8a8a8)] bg-[length:100%_1px] bg-center bg-no-repeat [&::-webkit-slider-thumb]:h-[11px] [&::-webkit-slider-thumb]:w-1 [&::-webkit-slider-thumb]:appearance-none [&::-webkit-slider-thumb]:bg-[#666]"
        />
        <button aria-label="放大" className="ml-[5px]">
          <Svg className="h-[7px] w-[7px]" box="0 0 7 7"><path d="M0 3.500h7M3.500 0v7" stroke="#444" strokeWidth="2" /></Svg>
        </button>
        <span className="ml-[14px] w-[34px] text-right">100%</span>
      </div>
    </footer>
  );
}

/* ---------- Dialogs ---------- */

const CloseCross = ({ outline }: { outline: string }) => (
  <Svg className="h-[10px] w-3" box="0 0 12 10">
    <path d="M2.500 1.500l7 7M9.500 1.500l-7 7" stroke={outline} strokeWidth="4.200" />
    <path d="M2.500 1.500l7 7M9.500 1.500l-7 7" stroke="#fff" strokeWidth="2.200" />
  </Svg>
);

function AddInsDialog() {
  return (
    <section
      aria-label="加载宏"
      className="absolute left-[596px] top-[183px] flex h-[442px] w-[293px] flex-col rounded-[7px] border border-[#555c63] bg-[linear-gradient(115deg,#f4fefe_0,#e4fbfa_90px,#e0f5f6_130px,#e2fbf9_220px,#f2fafa_100%)] text-black"
    >
      <div className="flex h-[29px] items-start justify-between">
        <h2 className="pl-[7px] leading-[28px]">加载宏</h2>
        <div className="mr-[6px] flex h-[19px] divide-x divide-[#8b9aa3] rounded-b-md border border-t-0 border-[#8b9aa3] bg-[#f2fbfb]/70">
          <button aria-label="帮助" className="w-7 text-sm font-bold leading-[18px] text-[#555]">?</button>
          <button aria-label="关闭" className="flex w-[47px] items-center justify-center">
            <CloseCross outline="#55595f" />
          </button>
        </div>
      </div>
      <div className="mx-[6px] mb-[6px] flex-1 border border-[#6a7279] bg-[#f0f0f0]" />
    </section>
  );
}

type Place = { label: string; icon: React.ReactNode; root?: boolean; active?: boolean; gapBefore?: boolean };

const places: Place[] = [
  { label: "Microsoft Excel", icon: <ExcelMark />, root: true },
  { label: "收藏夹", icon: <StarIcon />, root: true, gapBefore: true },
  { label: "python3", icon: <FolderMini /> },
  { label: "SWG", icon: <FolderMini /> },
  { label: "ATOM", icon: <FolderMini /> },
  { label: "下载", icon: <FolderMini arrow /> },
  { label: "桌面", icon: <DesktopMini />, active: true },
  { label: "最近访问的位置", icon: <RecentMini /> },
  { label: "库", icon: <LibraryMini />, root: true, gapBefore: true },
  { label: "视频", icon: <VideoMini /> },
  { label: "图片", icon: <PictureMini /> },
  { label: "文档", icon: <DocMini /> },
  { label: "音乐", icon: <MusicMini /> },
];

function Sidebar() {
  return (
    <aside className="flex w-[159px] shrink-0 border-r border-[#d6e0ee]">
      <ul className="min-w-0 flex-1 pl-[2px] pr-px pt-[10px]">
        {places.map((p) => (
          <li key={p.label} className={p.gapBefore ? "mt-[23px]" : ""}>
            <button
              className={`flex h-[23px] w-full items-center whitespace-nowrap rounded-[3px] border ${p.root ? "gap-[5px] pl-[17px]" : "gap-[5px] pl-[27px]"} ${
                p.active ? "border-[#d9d9d9] bg-linear-to-b from-[#f8f8f8] to-[#e5e5e5]" : "border-transparent"
              }`}
            >
              {p.icon}
              {p.label}
            </button>
          </li>
        ))}
      </ul>
      <div className="mr-[2px] flex w-[15px] flex-col items-center bg-[#f0f0f0] text-[#333]">
        <button aria-label="向上滚动" className="flex h-[18px] items-center"><Down className="h-1 w-[7px] rotate-180" /></button>
        <div className="flex h-[184px] w-full items-center justify-center rounded-[2px] border border-[#979797] bg-linear-to-r from-[#f5f5f5] via-[#e2e2e4] to-[#c4c5c9]">
          <Svg className="h-2 w-[7px]" box="0 0 7 8"><path d="M0 .5h7M0 3.500h7M0 6.500h7" stroke="#555" /></Svg>
        </div>
        <button aria-label="向下滚动" className="mt-auto flex h-[18px] items-center"><Down className="h-1 w-[7px]" /></button>
      </div>
    </aside>
  );
}

type Entry = { name: string; info: string[]; icon: React.ReactNode; selected?: boolean };

const entries: Entry[] = [
  { name: "库", info: ["系统文件夹"], icon: <LibraryLarge /> },
  { name: "AKAD5", info: ["系统文件夹"], icon: <UserFolder /> },
  { name: "计算机", info: ["系统文件夹"], icon: <ComputerLarge /> },
  { name: "网络", info: ["系统文件夹"], icon: <NetworkLarge /> },
  { name: "__", info: ["文件夹"], icon: <YellowFilesFolder /> },
  { name: "MicrosoftToolkit2.7", info: ["文件夹"], icon: <ChromeSheetFolder /> },
  { name: "SWG", info: ["文件夹"], icon: <BinderFolder /> },
  { name: "工作", info: ["文件夹"], icon: <ChromeFolder /> },
  { name: "健身", info: ["文件夹"], icon: <TwinChromeFolder /> },
  { name: "社保根证书安装交付材料", info: ["文件夹"], icon: <PapersFolder /> },
  { name: "md5", info: ["Microsoft Excel 加载宏", "54.0 KB"], icon: <XlamIcon />, selected: true },
];

function FileList() {
  return (
    <ul className="grid flex-1 grid-cols-[repeat(3,250px)] content-start gap-x-1 overflow-hidden pl-[15px] pt-[5px]">
      {entries.map((e, i) => (
        <li key={e.name} className={i > 8 ? "mt-[3px]" : ""}>
          <button
            className={`flex h-14 w-full items-center gap-[5px] rounded-[3px] border pl-[3px] text-left leading-[18px] ${
              e.selected ? "border-[#84a9dc] bg-linear-to-b from-[#dce9fb] to-[#bdd6f8]" : "border-transparent"
            }`}
          >
            {e.icon}
            <span className="whitespace-nowrap text-black">
              {e.name}
              {e.info.map((t) => (
                <span key={t} className="block text-[#6d6d6d]">{t}</span>
              ))}
            </span>
          </button>
        </li>
      ))}
    </ul>
  );
}

function BrowseDialog() {
  return (
    <section
      aria-label="浏览"
      className="absolute left-[604px] top-[213px] flex h-[540px] w-[960px] flex-col rounded-[7px] border border-[#1f2c3d] bg-[linear-gradient(#fff0_180px,#b9d5f5_182px),linear-gradient(100deg,#cbd9e8_0,#b4cbe4_180px,#a5c5e6_300px,#b3d4f8_360px,#b9dafb_620px,#a9c9ec_740px,#bbdcfd_860px,#d4e7fb_100%)] shadow-[inset_0_0_0_1px_#e9f3fdcc,0_0_6px_#0005] text-black"
    >
      <div className="absolute left-[56px] top-[10px] h-[10px] w-7 bg-[#4b6580]/30 blur-[4px]" />
      <div className="absolute left-[14px] top-[59px] h-[4px] w-[150px] bg-[#2f78c8]/70 blur-[2px]" />
      <div className="relative flex h-[33px] items-start justify-between pl-[7px] pr-[6px]">
        <div className="flex items-center gap-[5px] pt-[6px]">
          <ExcelMark />
          <h2 className="leading-4">浏览</h2>
        </div>
        <button
          aria-label="关闭对话框"
          className="flex h-[19px] w-[47px] items-center justify-center rounded-b-[5px] border border-t-0 border-[#3f1d1d] bg-[linear-gradient(#e8a99b_0,#d5776a_45%,#b8341f_50%,#d86a50_100%)] shadow-[inset_0_0_0_1px_#f3c9c199]"
        >
          <CloseCross outline="#5b3030" />
        </button>
      </div>
      <div className="relative flex h-[23px] items-center pl-[9px] pr-2">
        <div className="flex items-center gap-[2px]">
          <button aria-label="后退">
            <Svg className="h-[26px] w-[26px]" box="0 0 26 26">
              <circle cx="13" cy="13" r="12" fill="#1d5fbf" stroke="#4a5e78" strokeWidth="1.200" />
              <path d="M2.500 12a10.500 10 0 0121 0q-10 4-21 0z" fill="#9fc8ee" opacity=".6" />
              <ellipse cx="13" cy="21" rx="7" ry="3.500" fill="#41c3f5" opacity=".7" />
              <path d="M13 6.500l-7 6.500 7 6.500v-4.500h7v-4h-7z" fill="#fff" />
            </Svg>
          </button>
          <button aria-label="前进">
            <Svg className="h-[26px] w-[26px]" box="0 0 26 26">
              <circle cx="13" cy="13" r="12" fill="#c3cfdb" stroke="#6e7f93" strokeWidth="1.200" />
              <path d="M2 12a11 10.500 0 0122 0q-11 3-22 0z" fill="#e9eff5" opacity=".8" />
              <path d="M13 7l7 6-7 6v-4H7v-4h6z" fill="#d9e1e9" />
            </Svg>
          </button>
        </div>
        <button aria-label="最近浏览的位置" className="ml-[2px]">
          <Svg className="h-[7px] w-[10px]" box="0 0 10 7"><path d="M1 1h8L5 5.500z" fill="#4aa6e0" stroke="#1c4a78" /></Svg>
        </button>
        <div className="ml-[3px] flex h-[23px] flex-1 items-center border border-[#6b819b] bg-[#f0f6fd]/90">
          <button className="flex items-center gap-1 pl-[2px]">
            <DesktopMini />
            桌面
          </button>
          <Svg className="ml-[13px] h-[7px] w-1" box="0 0 4 7"><path d="M0 0v7l4-3.500z" fill="#000" /></Svg>
          <button aria-label="以前的位置" className="ml-auto mr-[6px]"><Down className="h-1 w-[7px]" /></button>
          <button aria-label="刷新" className="flex h-full w-6 items-center justify-center border-l border-[#6b819b]">
            <Svg className="h-[14px] w-[14px]" box="0 0 14 14">
              <path d="M5.500 1.500q-3 1.500-2 5.500" stroke="#2f86c8" strokeWidth="2" />
              <path d="M0 6h7l-3.500 4z" fill="#2f86c8" />
              <path d="M8.500 12.500q3-1.500 2-5.500" stroke="#2660a8" strokeWidth="2" />
              <path d="M7 8h7l-3.500-4z" fill="#2660a8" />
            </Svg>
          </button>
        </div>
        <div className="ml-[7px] flex h-[23px] w-[202px] items-center border border-[#6b819b] bg-[#f0f6fd]/90 pr-[5px]">
          <input type="search" aria-label="搜索 桌面" placeholder="搜索 桌面" className="w-0 flex-1 bg-transparent pl-[9px] italic outline-none placeholder:text-[#6d6d6d]" />
          <Svg className="h-[14px] w-[14px]" box="0 0 14 14">
            <circle cx="8.500" cy="5" r="4" fill="#e8f4fc" stroke="#2f78b8" strokeWidth="1.600" />
            <path d="M5.500 8.500L1 13" stroke="#2f78b8" strokeWidth="2.200" />
          </Svg>
        </div>
      </div>
      <div className="relative mx-[6px] mb-[6px] mt-[6px] flex min-h-0 flex-1 flex-col border border-[#4f6b8c] bg-[#f0f0f0]">
        <div className="flex h-[33px] items-center border-b border-[#a0b3cf] bg-[linear-gradient(#fafcfe_0,#e8eff9_45%,#dce6f4_50%,#dbe6f5_100%)] pl-[18px] pr-[15px] text-[#1e395b]">
          <button className="flex items-center gap-[6px]">组织<Down className="h-1 w-[7px]" /></button>
          <button className="ml-[30px]">新建文件夹</button>
          <button aria-label="更改视图" className="ml-auto flex items-center gap-[10px]">
            <Svg>
              <path d="M.5.500h7v6h-7zM.5 9.500h7v6h-7z" fill="#fff" stroke="#8c98a3" />
              <path d="M2 3h3v2H2zM3 12h3v2H3z" fill="#3f9a68" />
              <path d="M9 2.500h6M9 5.500h4M9 11.500h6M9 14.500h4" stroke="#5c6f88" />
            </Svg>
            <Down className="h-1 w-[7px]" />
          </button>
          <button aria-label="显示预览窗格" className="ml-[22px]">
            <Svg>
              <rect x=".5" y="1.500" width="15" height="13" fill="#fff" stroke="#5c6f88" />
              <path d="M1 4.500h9" stroke="#a8b8c8" />
              <path d="M10 2h5v12h-5z" fill="#7cc4dc" stroke="#4a8ca8" />
            </Svg>
          </button>
          <button aria-label="获取帮助" className="ml-5 h-4 w-4 rounded-full border border-[#8a94a8] bg-[radial-gradient(circle_at_50%_30%,#5f8be0,#16348c)] text-center text-xs font-bold leading-[14px] text-white">
            ?
          </button>
        </div>
        <div className="flex min-h-0 flex-1 overflow-hidden bg-[#fcfcfc]">
          <Sidebar />
          <FileList />
        </div>
        <form className="flex h-[84px] flex-col pr-[17px] pt-[11px]" onSubmit={(e) => e.preventDefault()}>
          <div className="flex items-center">
            <label htmlFor="filename" className="w-[187px] whitespace-nowrap text-right">
              文件名(<u>N</u>):
            </label>
            <div className="ml-[5px] flex h-[25px] flex-1 items-center border border-[#e2e3ea] border-t-[#abadb3] bg-white pr-[3px]">
              <input id="filename" defaultValue="md5" className="min-w-0 flex-1 bg-transparent pl-[3px] outline-none" />
              <button type="button" aria-label="文件名列表"><Down className="h-1 w-[7px]" /></button>
            </div>
            <div className="relative ml-[13px] w-[188px]">
              <select aria-label="文件类型" className="h-[25px] w-full appearance-none rounded-[3px] border border-[#707070] bg-[linear-gradient(#f2f2f2_0,#ebebeb_48%,#dddddd_52%,#cfcfcf_100%)] px-[3px] outline-none">
                <option>加载宏</option>
              </select>
              <Down className="pointer-events-none absolute right-[5px] top-[10px] h-1 w-[7px]" />
            </div>
          </div>
          <div className="mt-[7px] flex items-center justify-end pr-px">
            <button type="button" className="flex items-center">
              <span>工具(<u>L</u>)</span>
              <Down className="ml-[19px] h-1 w-[7px]" />
            </button>
            <button className="ml-[18px] h-7 w-[86px] rounded-[3px] border border-[#2c8fc0] bg-[linear-gradient(#eaf6fc_0,#dceff8_48%,#bfdfee_52%,#b4d8ea_100%)] shadow-[inset_0_0_0_1px_#45cdf5]">
              确定
            </button>
            <button type="button" className="ml-[14px] h-7 w-[86px] rounded-[3px] border border-[#707070] bg-[linear-gradient(#f2f2f2_0,#ebebeb_48%,#dddddd_52%,#cfcfcf_100%)] shadow-[inset_0_0_0_1px_#fbfbfb]">
              取消
            </button>
          </div>
        </form>
        <Svg className="absolute bottom-[2px] right-[3px] h-[9px] w-[9px]" box="0 0 9 9">
          <path d="M7 1h1v1H7zM4 4h1v1H4zM7 4h1v1H7zM1 7h1v1H1zM4 7h1v1H4zM7 7h1v1H7z" fill="#a8a8a8" />
        </Svg>
      </div>
    </section>
  );
}

function Annotations() {
  return (
    <div className="pointer-events-none">
      <div className="absolute left-[1021px] top-[482px] h-[88px] w-[315px] border-[7px] border-[#fb3838]" />
      <svg className="absolute left-[1368px] top-[558px] h-24 w-[268px]" viewBox="0 0 268 96" aria-hidden="true">
        <path d="M1 6.500L19 3l-1 5 247 82L16 13.500l-2 4.500z" fill="#fb3838" stroke="#fb3838" strokeWidth=".4" />
      </svg>
    </div>
  );
}

export default function App() {
  return (
    <div className="relative h-screen overflow-hidden bg-[#e6e6e6] font-['Noto_Sans','Noto_Sans_CJK_SC',sans-serif] text-xs">
      <SharedGradients />
      <div className="flex h-full flex-col border-r-2 border-[#3d5068]">
        <TitleBar />
        <Ribbon />
        <FormulaBar />
        <Sheet1Grid />
        <SheetTabs />
        <StatusBar />
      </div>
      <AddInsDialog />
      <BrowseDialog />
      <Annotations />
    </div>
  );
}
